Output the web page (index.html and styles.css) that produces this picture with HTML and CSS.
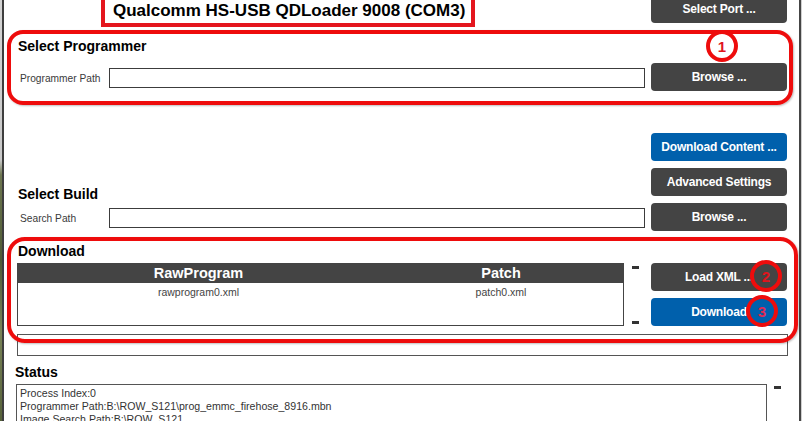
FILE: index.html
```html
<!DOCTYPE html>
<html lang="en">
<head>
<meta charset="utf-8">
<title>QFIL</title>
<link rel="stylesheet" href="styles.css">
</head>
<body>
<div class="screen">
  <div class="desk"></div>
  <main class="win">
    <div class="top">
      <div class="device">Qualcomm HS-USB QDLoader 9008 (COM3)</div>
      <button class="btn dark port">Select Port ...</button>
    </div>

    <h2 class="head prog-head">Select Programmer</h2>
    <div class="path-row">
      <span class="lbl">Programmer Path</span>
      <div class="field"></div>
      <button class="btn dark">Browse ...</button>
    </div>

    <div class="build-head">
      <h2 class="head build-title">Select Build</h2>
      <div class="stack">
        <button class="btn blue">Download Content ...</button>
        <button class="btn dark">Advanced Settings</button>
      </div>
    </div>
    <div class="path-row search-row">
      <span class="lbl">Search Path</span>
      <div class="field"></div>
      <button class="btn dark">Browse ...</button>
    </div>

    <h2 class="head dl-head">Download</h2>
    <div class="dl-row">
      <div class="xml-table">
        <div class="th">RawProgram</div>
        <div class="th">Patch</div>
        <div class="td">rawprogram0.xml</div>
        <div class="td">patch0.xml</div>
      </div>
      <div class="grips"><span class="grip"></span><span class="grip"></span></div>
      <div class="stack">
        <button class="btn dark">Load XML ...</button>
        <button class="btn blue">Download</button>
      </div>
    </div>
    <div class="spare"></div>

    <h2 class="head status-head">Status</h2>
    <div class="status-row">
      <div class="status-box">
        <div>Process Index:0</div>
        <div>Programmer Path:B:\ROW_S121\prog_emmc_firehose_8916.mbn</div>
        <div>Image Search Path:B:\ROW_S121</div>
      </div>
      <span class="grip status-grip"></span>
    </div>
  </main>
  <div class="edge"></div>

  <div class="ann-box ann-prog"></div>
  <div class="ann-box ann-dl"></div>
  <div class="ann-circle c1">1</div>
  <div class="ann-circle c2">2</div>
  <div class="ann-circle c3">3</div>
</div>
</body>
</html>
```

FILE: styles.css
```css
* { box-sizing: border-box; }

html, body {
  margin: 0;
  padding: 0;
  background: #ffffff;
}

body {
  width: 802px;
  height: 421px;
  overflow: hidden;
  font-family: "Liberation Sans", Arial, sans-serif;
}

.screen {
  position: relative;
  display: flex;
  width: 802px;
  height: 421px;
  overflow: hidden;
}

.desk {
  flex: 0 0 2px;
  background: linear-gradient(to bottom, #d4d4d4 0, #c9c9c9 160px, #6d7650 175px, #4f5b35 260px, #7a8458 330px, #56613a 421px);
}

.edge {
  flex: 0 0 1px;
  background: #cfcfcf;
}

.win {
  flex: 0 0 799px;
  border-left: 2px solid #3e3e3e;
  border-right: 2px solid #454545;
  background: #ffffff;
  padding-left: 14px;
}

.top {
  display: flex;
  align-items: flex-start;
  width: 769px;
  height: 27px;
}

.device {
  margin-left: 83px;
  height: 27px;
  padding: 0 6px 0 8px;
  border: 4px solid #e4161e;
  border-top: 0;
  font-size: 17px;
  font-weight: bold;
  line-height: 21px;
  color: #000;
  white-space: nowrap;
}

.btn {
  display: flex;
  align-items: center;
  justify-content: center;
  width: 136px;
  height: 28px;
  padding: 0;
  border: 0;
  border-radius: 4px;
  font-family: "Liberation Sans", Arial, sans-serif;
  font-size: 12px;
  font-weight: bold;
  letter-spacing: -0.2px;
  color: #ffffff;
  white-space: nowrap;
}

.dark { background: #444444; }
.blue { background: #0060ac; }

.port {
  margin-left: auto;
  margin-top: -5px;
}

.head {
  margin: 0;
  font-size: 14px;
  font-weight: bold;
  line-height: 16px;
  color: #000;
}

.prog-head {
  margin-top: 11px;
  margin-bottom: 9px;
}

.path-row {
  display: grid;
  grid-template-columns: 91px 536px 142px;
  align-items: center;
  width: 769px;
  height: 28px;
}

.path-row .btn { margin-left: 6px; }
.path-row .field { margin-top: 2px; }

.lbl {
  padding-left: 2px;
  font-size: 10.2px;
  color: #3a3a3a;
  white-space: nowrap;
  margin-top: 2px;
}

.field {
  height: 20px;
  border: 1px solid #3c3c3c;
  background: #fff;
}

.build-head {
  display: flex;
  justify-content: space-between;
  align-items: flex-start;
  width: 769px;
  margin-top: 42px;
}

.build-title {
  align-self: flex-end;
  margin-bottom: -6px;
}

.stack {
  display: flex;
  flex-direction: column;
  gap: 7px;
}

.search-row { margin-top: 7px; }

.dl-head {
  margin-top: 12px;
  margin-bottom: 4px;
}

.dl-row {
  display: flex;
  align-items: flex-start;
}

.xml-table {
  display: grid;
  grid-template-columns: 361px 244px;
  grid-template-rows: 19px 42px;
  width: 607px;
  height: 63px;
  margin-left: -1px;
  border: 1px solid #444;
  border-top: 0;
}

.th {
  background: #444444;
  color: #fff;
  font-size: 14.5px;
  font-weight: bold;
  line-height: 20px;
  text-align: center;
  height: 20px;
}

.td {
  padding-top: 4px;
  font-size: 10.5px;
  line-height: 13px;
  color: #444;
  text-align: center;
}

.grips {
  display: flex;
  flex-direction: column;
  justify-content: space-between;
  width: 27px;
  height: 63px;
  padding: 3px 0 2px 8px;
}

.grip {
  display: block;
  width: 7px;
  height: 3px;
  background: #333;
}

.spare {
  width: 771px;
  height: 22px;
  margin-top: 8px;
  margin-left: -1px;
  border: 1px solid #555;
}

.status-head {
  margin-top: 8px;
  margin-left: -3px;
}

.status-row {
  display: flex;
  align-items: flex-start;
  margin-top: 4px;
  margin-left: -2px;
}

.status-box {
  width: 751px;
  height: 60px;
  padding: 2px 0 0 3px;
  border: 1px solid #555;
  font-size: 10.6px;
  line-height: 13px;
  color: #333;
  white-space: nowrap;
}

.status-grip {
  margin-left: 7px;
  margin-top: 2px;
}

/* annotation overlays drawn over the screenshot */
.ann-box {
  position: absolute;
  border: 4px solid #ee0c0c;
  box-shadow: 1px 1px 2px rgba(0, 0, 0, 0.25);
}

.ann-prog {
  left: 7px;
  top: 30px;
  width: 786px;
  height: 75px;
  border-radius: 16px;
}

.ann-dl {
  left: 7px;
  top: 237px;
  width: 791px;
  height: 106px;
  border-radius: 18px;
}

.ann-circle {
  position: absolute;
  width: 32px;
  height: 32px;
  border: 4px solid #ee0c0c;
  border-radius: 50%;
  display: flex;
  align-items: center;
  justify-content: center;
  font-size: 15px;
  font-weight: bold;
  color: #e0141c;
}

.c1 { left: 706px; top: 30px; background: #fff; }
.c2 { left: 750px; top: 260px; background: #444444; }
.c3 { left: 746px; top: 295px; background: #0060ac; color: #e02a55; }
```
